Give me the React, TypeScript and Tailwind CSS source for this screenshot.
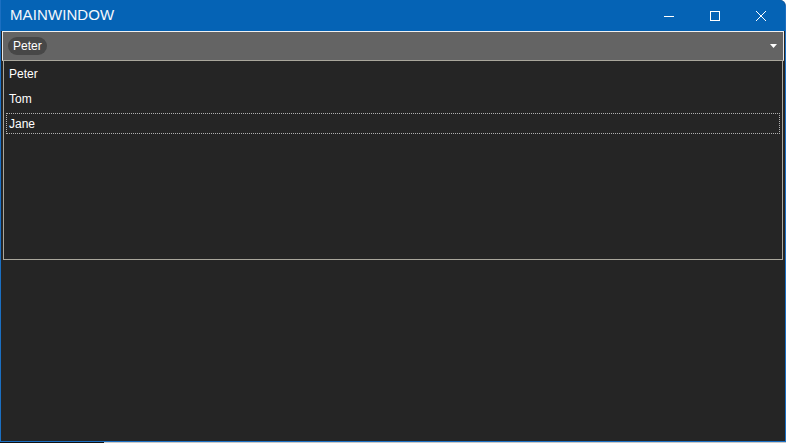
import React from "react";

const people = ["Peter", "Tom", "Jane"];
const focused = "Jane";

function CaptionButtons() {
  return (
    <div className="flex h-full">
      <div className="flex h-full w-[46px] items-center justify-center">
        <svg width="10" height="10" viewBox="0 0 10 10">
          <line x1="0" y1="5.5" x2="10" y2="5.5" stroke="white" strokeWidth="1" />
        </svg>
      </div>
      <div className="flex h-full w-[46px] items-center justify-center">
        <svg width="10" height="10" viewBox="0 0 10 10">
          <rect x="0.5" y="0.5" width="9" height="9" fill="none" stroke="white" strokeWidth="1" />
        </svg>
      </div>
      <div className="flex h-full w-[46px] items-center justify-center">
        <svg width="10" height="10" viewBox="0 0 10 10">
          <path d="M0 0 L10 10 M10 0 L0 10" stroke="white" strokeWidth="1" />
        </svg>
      </div>
    </div>
  );
}

export default function App() {
  return (
    <div
      className="relative h-[443px] w-[800px] overflow-hidden bg-white"
      style={{ fontFamily: '"Liberation Sans", Arial, sans-serif' }}
    >
      <div className="flex h-[442px] w-[786px] flex-col overflow-hidden rounded-tr-[6px] border-x border-b border-[#1b6fc2] bg-[#252525]">
        {/* title bar */}
        <div className="flex h-[31px] shrink-0 items-center justify-between bg-[#0563b5] pl-[9px] pr-[1px]">
          <span className="text-[15px] font-light tracking-[0.1px] text-[#f4f8fc]">MAINWINDOW</span>
          <CaptionButtons />
        </div>

        {/* combo box */}
        <div className="relative">
          <div className="ml-[1px] mr-[1px] flex h-[30px] items-center justify-between border border-b-[#a8a69a] border-x-[#e6e6e6] border-t-[#f0f0f0] bg-[#646464] pl-[5px] pr-[6px]">
            <span className="rounded-full bg-[#474747] px-[5px] py-[2px] text-[12px] leading-[14px] text-white">
              Peter
            </span>
            <svg width="7" height="4" viewBox="0 0 7 4">
              <path d="M0 0 L7 0 L3.5 4 Z" fill="white" />
            </svg>
          </div>

          {/* dropdown popup */}
          <div className="absolute left-[2px] right-[2px] top-[29px] h-[200px] border border-[#aaa79c] bg-[#252525]">
            {people.map((p) => (
              <div key={p} className="h-[25px] px-[2px] py-[2px]">
                <div
                  className={
                    p === focused
                      ? "flex h-[21px] items-center border border-dotted border-[#b0b0b0] pl-[2px] text-[12px] text-white"
                      : "flex h-[21px] items-center border border-transparent pl-[2px] text-[12px] text-white"
                  }
                >
                  {p}
                </div>
              </div>
            ))}
          </div>
        </div>
      </div>
      <div className="flex h-[1px]">
        <div className="w-[104px] bg-[#111111]" />
        <div className="w-[682px] bg-[#c8c8c8]" />
      </div>
    </div>
  );
}
